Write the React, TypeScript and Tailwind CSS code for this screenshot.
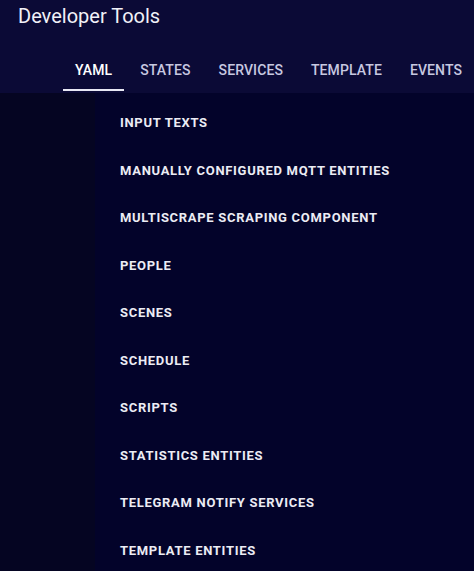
const tabs = ['YAML', 'STATES', 'SERVICES', 'TEMPLATE', 'EVENTS'];

const items = [
  'Input texts',
  'Manually configured MQTT entities',
  'Multiscrape scraping component',
  'People',
  'Scenes',
  'Schedule',
  'Scripts',
  'Statistics entities',
  'Telegram notify services',
  'Template entities',
];

export default function App() {
  return (
    <div
      className="h-[571px] w-[474px] overflow-hidden bg-[#050522]"
      style={{ fontFamily: 'Roboto, "Liberation Sans", sans-serif' }}
    >
      {/* ── HEADER ── */}
      <header className="h-[93px] bg-[#0b0a36]">
        <h1 className="pl-[18px] pt-[2px] text-[20px] leading-[28px] text-[#f1f1f8]">Developer Tools</h1>
        <nav className="mt-[18px] flex pl-[63px]">
          {tabs.map((t, i) => (
            <div key={t} className="relative flex h-[44px] items-center px-[12px] mr-[4px]">
              <span
                className={
                  'text-[14px] font-medium tracking-[0.1px] ' + (i === 0 ? 'text-white' : 'text-[#c7c8e0]')
                }
              >
                {t}
              </span>
              {i === 0 && <div className="absolute bottom-[1px] left-0 right-0 h-[2px] bg-[#e8e8f4]" />}
            </div>
          ))}
        </nav>
      </header>

      {/* ── LIST ── */}
      <div className="ml-[95px] h-full bg-[#03032a] pt-[6px]">
        {items.map((it) => (
          <div
            key={it}
            className="flex h-[47.5px] items-center pl-[25px] text-[13px] font-bold uppercase tracking-[0.7px] text-[#ececf4]"
          >
            {it}
          </div>
        ))}
      </div>
    </div>
  );
}
